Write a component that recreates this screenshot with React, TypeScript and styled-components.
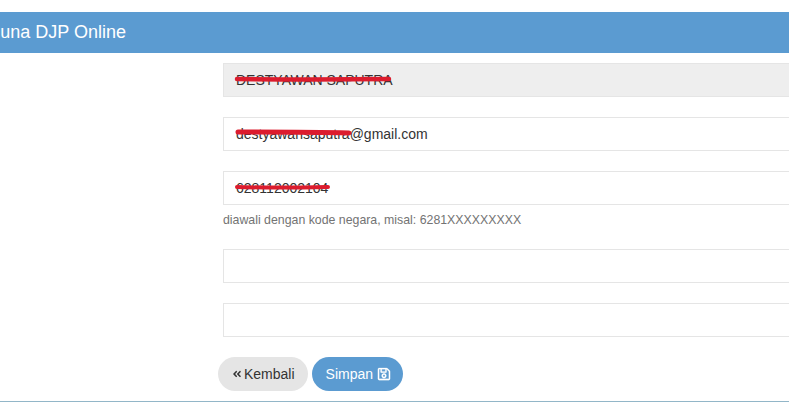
import styled, { createGlobalStyle } from "styled-components";
import { FaAngleDoubleLeft, FaRegSave } from "react-icons/fa";

const GlobalStyle = createGlobalStyle`
  html, body {
    margin: 0;
    padding: 0;
    background: #fff;
    overflow: hidden;
  }
`;

const Page = styled.div`
  width: 789px;
  height: 414px;
  padding-top: 12px;
  box-sizing: border-box;
  overflow: hidden;
  font-family: "Liberation Sans", Arial, sans-serif;
  font-size: 14px;
  color: #333;
`;

const Heading = styled.div`
  height: 41px;
  background: #5b9bd1;
  display: flex;
  align-items: center;
`;

const Title = styled.h3`
  width: 126px;
  margin: 0;
  display: flex;
  justify-content: flex-end;
  overflow: hidden;
  white-space: nowrap;
  font-size: 18px;
  font-weight: 400;
  color: #fff;
`;

const Form = styled.form`
  margin: 10px 0 0 218px;
  width: 800px;
`;

const Group = styled.div`
  margin: 0 0 20px 5px;
`;

const Field = styled.div`
  position: relative;
`;

const Input = styled.input<{ $disabled?: boolean }>`
  display: block;
  width: 100%;
  height: 34px;
  box-sizing: border-box;
  padding: 6px 12px;
  border: 1px solid #e5e5e5;
  background: ${(props) => (props.$disabled ? "#eeeeee" : "#fff")};
  font-family: inherit;
  font-size: 14px;
  color: #333;
  outline: none;
`;

const Scribble = styled.svg`
  position: absolute;
  left: 0;
  top: 0;
  width: 200px;
  height: 34px;
  pointer-events: none;
`;

const Help = styled.span`
  display: block;
  margin-top: 7px;
  font-size: 12.33px;
  line-height: 17px;
  color: #737373;
`;

const Actions = styled.div`
  display: flex;
  gap: 4px;
`;

const Button = styled.button<{ $primary?: boolean }>`
  height: 34px;
  padding: ${(props) => (props.$primary ? "0 12px 0 14px" : "0 13px 0 14px")};
  border: 0;
  border-radius: 17px;
  display: flex;
  align-items: center;
  gap: ${(props) => (props.$primary ? "4px" : "2px")};
  background: ${(props) => (props.$primary ? "#5b9bd1" : "#e5e5e5")};
  color: ${(props) => (props.$primary ? "#fff" : "#333")};
  font-family: inherit;
  font-size: 14px;
`;

const Rule = styled.div`
  height: 1px;
  margin-top: 10px;
  background: #92b6c8;
`;

export default function App() {
  return (
    <Page>
      <GlobalStyle />
      <Heading>
        <Title>Profil Pengguna DJP Online</Title>
      </Heading>
      <Form>
        <Group>
          <Field>
            <Input $disabled readOnly value="DESTYAWAN SAPUTRA" />
            <Scribble viewBox="0 0 200 34">
              <path d="M14 16 C 60 16.5 120 16.5 166 16" fill="none" stroke="#dc1c2e" strokeWidth="4.5" strokeLinecap="round" />
            </Scribble>
          </Field>
        </Group>
        <Group>
          <Field>
            <Input readOnly value="destyawansaputra@gmail.com" />
            <Scribble viewBox="0 0 200 34">
              <path d="M15 15 C 50 15 90 15 126 16" fill="none" stroke="#dc1c2e" strokeWidth="5" strokeLinecap="round" />
            </Scribble>
          </Field>
        </Group>
        <Group>
          <Field>
            <Input readOnly value="628112002104" />
            <Scribble viewBox="0 0 200 34">
              <path d="M14 16 C 50 17 80 16.5 105 16" fill="none" stroke="#dc1c2e" strokeWidth="4" strokeLinecap="round" />
            </Scribble>
          </Field>
          <Help>diawali dengan kode negara, misal: 6281XXXXXXXXX</Help>
        </Group>
        <Group>
          <Input readOnly />
        </Group>
        <Group>
          <Input readOnly />
        </Group>
        <Actions>
          <Button type="button">
            <FaAngleDoubleLeft size={10} />
            Kembali
          </Button>
          <Button $primary type="button">
            Simpan
            <FaRegSave size={14} stroke="currentColor" strokeWidth={8} />
          </Button>
        </Actions>
      </Form>
      <Rule />
    </Page>
  );
}
